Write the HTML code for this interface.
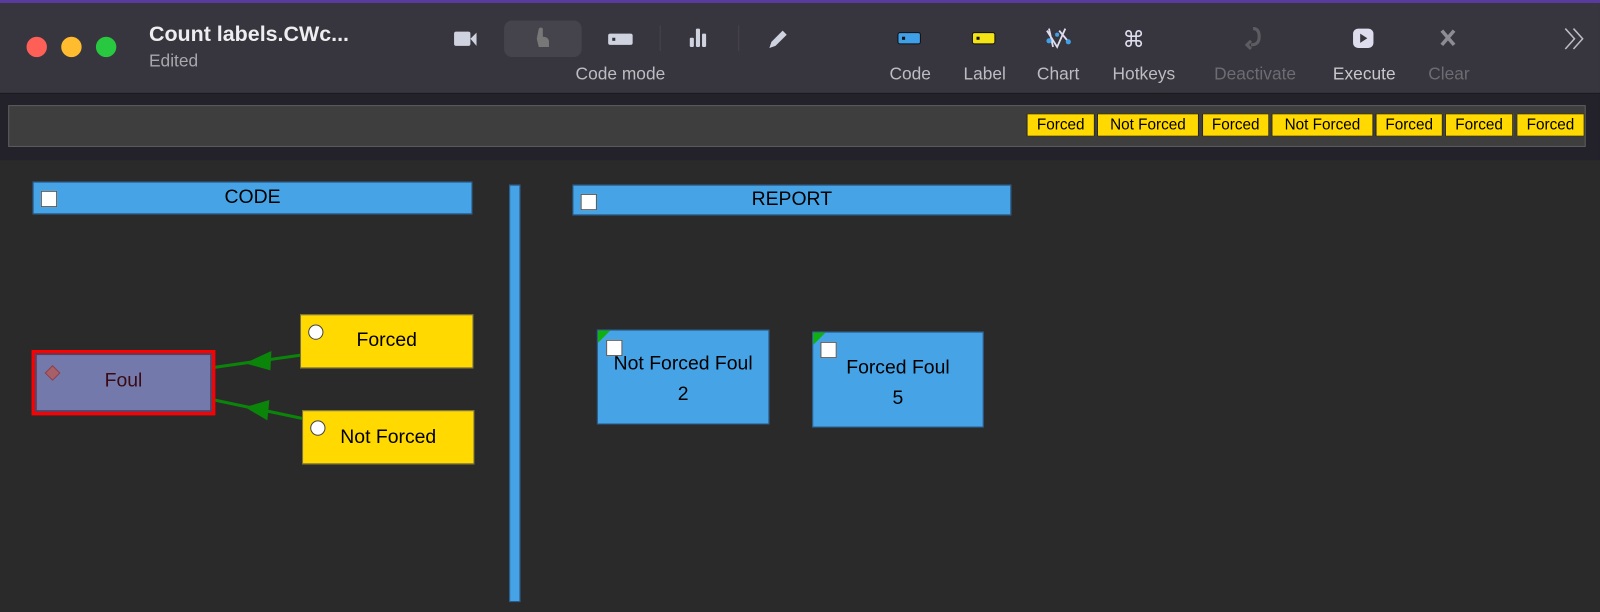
<!DOCTYPE html>
<html><head><meta charset="utf-8"><style>
*{margin:0;padding:0;box-sizing:border-box}
body{width:1600px;height:607px;overflow:hidden;background:#2a2a2a;font-family:"Liberation Sans",sans-serif;position:relative}
#wrap{position:absolute;left:0;top:0;width:1568px;height:595px;transform:scale(1.0204);transform-origin:0 0}
.abs{position:absolute}
#title{left:0;top:0;width:1568px;height:92px;background:#37353d;border-top:3px solid #5b3a9e;border-bottom:1px solid #18171b}
#strip{left:0;top:92px;width:1568px;height:65px;background:#232129}
#bar{left:8px;top:103px;width:1546px;height:41px;background:#3e3e3e;border:1px solid #5c5c5c}
.tag{position:absolute;top:111px;height:23px;background:#ffd900;border:1px solid #222;color:#000;font-size:15px;line-height:21px;text-align:center;white-space:nowrap}
.lbl{position:absolute;top:63px;font-size:17px;color:#bdbcc2;text-align:center}
.blue{background:#46a4e6;border:1px solid #2a5a8a}
.cb{position:absolute;width:16px;height:16px;background:#fff;border:1px solid #555}
.ylw{position:absolute;background:#ffd900;border:1px solid #777040;font-size:19px;color:#000;text-align:center}
.circ{position:absolute;width:15px;height:15px;border-radius:50%;background:#fff;border:1px solid #444}
.card{position:absolute;font-size:19px;color:#000;text-align:center;line-height:30px}
.tri{position:absolute;width:0;height:0;border-top:12px solid #11b011;border-right:12px solid transparent}
</style></head><body><div id="wrap">
<div id="title" class="abs"></div>
<div class="abs" style="left:26px;top:36px;width:20px;height:20px;border-radius:50%;background:#fe5f57"></div>
<div class="abs" style="left:60px;top:36px;width:20px;height:20px;border-radius:50%;background:#febc2e"></div>
<div class="abs" style="left:94px;top:36px;width:20px;height:20px;border-radius:50%;background:#28c840"></div>
<div class="abs" style="left:146px;top:22px;font-size:21px;font-weight:bold;color:#eeeef0">Count labels.CWc...</div>
<div class="abs" style="left:146px;top:50px;font-size:17px;color:#a8a7ad">Edited</div>
<svg class="abs" style="left:440px;top:20px" width="360" height="36">
<rect x="54" y="0" width="76" height="36" rx="8" fill="#45434b"/>
<rect x="5" y="11" width="16" height="14" rx="2" fill="#cfd3e0"/><path d="M21 18 L27 12 V25 Z" fill="#cfd3e0"/>
<path d="M88 8 q2-2 4 0 v8 q5 0 6 4 v6 h-10 l-2-8 z" fill="#777"/>
<rect x="156" y="13" width="24" height="11" rx="2" fill="#cfd3e0"/><rect x="160" y="17" width="3" height="3" fill="#333"/>
<line x1="207" y1="5" x2="207" y2="30" stroke="#46444c"/>
<rect x="236" y="17" width="4" height="9" rx="1" fill="#cfd3e0"/><rect x="242" y="8" width="4" height="18" rx="1" fill="#cfd3e0"/><rect x="248" y="13" width="4" height="13" rx="1" fill="#cfd3e0"/>
<line x1="284" y1="5" x2="284" y2="30" stroke="#46444c"/>
<path d="M314 27 l2-6 l11-11 l4 4 l-11 11 z" fill="#cfd3e0"/>
</svg>
<div class="lbl" style="left:548px;width:120px">Code mode</div>
<svg class="abs" style="left:860px;top:22px" width="700" height="34">
<rect x="20" y="10" width="22" height="11" rx="2" fill="#3fa0e8" stroke="#111"/><rect x="24" y="14" width="3" height="3" fill="#111"/>
<rect x="93" y="10" width="22" height="11" rx="2" fill="#f5e415" stroke="#111"/><rect x="97" y="14" width="3" height="3" fill="#111"/>
<path d="M166 8 L176 24 L184 6 M168 6 L172 24 M178 8 L188 20" stroke="#dde" stroke-width="1.8" fill="none"/><circle cx="168" cy="18" r="2.5" fill="#3fa0e8"/><circle cx="187" cy="19" r="2.5" fill="#3fa0e8"/><circle cx="176" cy="12" r="2" fill="#3fa0e8"/>
<text x="251" y="24" font-size="22" fill="#dde" text-anchor="middle" font-family="DejaVu Sans">⌘</text>
<path d="M368 6 q6 0 6 8 q0 8 -8 8 M366 18 l-4 4 l4 4" stroke="#5d5c62" stroke-width="3" fill="none"/>
<rect x="466" y="6" width="20" height="19" rx="5" fill="#dde"/><path d="M473 11 l7 4.5 l-7 4.5z" fill="#37353d"/>
<path d="M553 8 l12 14 M565 8 l-12 14" stroke="#8d8c93" stroke-width="3.5"/>
<path d="M674 6 l9 10 l-9 10 M682 6 l9 10 l-9 10" stroke="#bdbcc2" stroke-width="1.5" fill="none"/>
</svg>
<div class="lbl" style="left:852px;width:80px">Code</div>
<div class="lbl" style="left:925px;width:80px">Label</div>
<div class="lbl" style="left:997px;width:80px">Chart</div>
<div class="lbl" style="left:1076px;width:90px">Hotkeys</div>
<div class="lbl" style="left:1175px;width:110px;color:#6d6c72">Deactivate</div>
<div class="lbl" style="left:1292px;width:90px;color:#c8c7cc">Execute</div>
<div class="lbl" style="left:1385px;width:70px;color:#6d6c72">Clear</div>
<div id="strip" class="abs"></div>
<div id="bar" class="abs"></div>
<div class="tag" style="left:1006px;width:67px">Forced</div>
<div class="tag" style="left:1075px;width:100px">Not Forced</div>
<div class="tag" style="left:1178px;width:66px">Forced</div>
<div class="tag" style="left:1246px;width:100px">Not Forced</div>
<div class="tag" style="left:1348px;width:66px">Forced</div>
<div class="tag" style="left:1416px;width:67px">Forced</div>
<div class="tag" style="left:1486px;width:67px">Forced</div>
<div class="abs blue" style="left:32px;top:178px;width:431px;height:32px;font-size:19px;text-align:center;line-height:29px;color:#000">CODE</div>
<div class="cb" style="left:40px;top:187px"></div>
<div class="abs blue" style="left:499px;top:181px;width:11px;height:409px"></div>
<div class="abs blue" style="left:561px;top:181px;width:430px;height:30px;font-size:19px;text-align:center;line-height:27px;color:#000">REPORT</div>
<div class="cb" style="left:569px;top:190px"></div>
<svg class="abs" style="left:0;top:0" width="600" height="600">
<line x1="210" y1="360" x2="295" y2="348" stroke="#0a850a" stroke-width="3"/>
<path d="M240 356 L266 344 L265 363 Z" fill="#0a850a"/>
<line x1="210" y1="392" x2="296" y2="410" stroke="#0a850a" stroke-width="3"/>
<path d="M240 399 L264 392 L262 412 Z" fill="#0a850a"/>
</svg>
<div class="abs" style="left:31px;top:343px;width:180px;height:64px;border:3px solid #ff0000;background:#5a3a5a"></div>
<div class="abs" style="left:35px;top:347px;width:172px;height:56px;background:#737aab;border:1px solid #5a3a5a;color:#3a0a14;font-size:19px;text-align:center;line-height:52px">Foul</div>
<div class="abs" style="left:46px;top:360px;width:11px;height:11px;transform:rotate(45deg);background:#a86068;border:1px solid #8a4050"></div>
<div class="ylw" style="left:294px;top:308px;width:170px;height:53px;line-height:50px">Forced</div>
<div class="circ" style="left:302px;top:318px"></div>
<div class="ylw" style="left:296px;top:402px;width:169px;height:53px;line-height:52px">Not Forced</div>
<div class="circ" style="left:304px;top:412px"></div>
<div class="card blue" style="left:585px;top:323px;width:169px;height:93px;padding-top:18px">Not Forced Foul<br>2</div>
<div class="tri" style="left:586px;top:324px"></div>
<div class="cb" style="left:594px;top:333px"></div>
<div class="card blue" style="left:796px;top:325px;width:168px;height:94px;padding-top:20px">Forced Foul<br>5</div>
<div class="tri" style="left:797px;top:326px"></div>
<div class="cb" style="left:804px;top:335px"></div>
</div></body></html>
